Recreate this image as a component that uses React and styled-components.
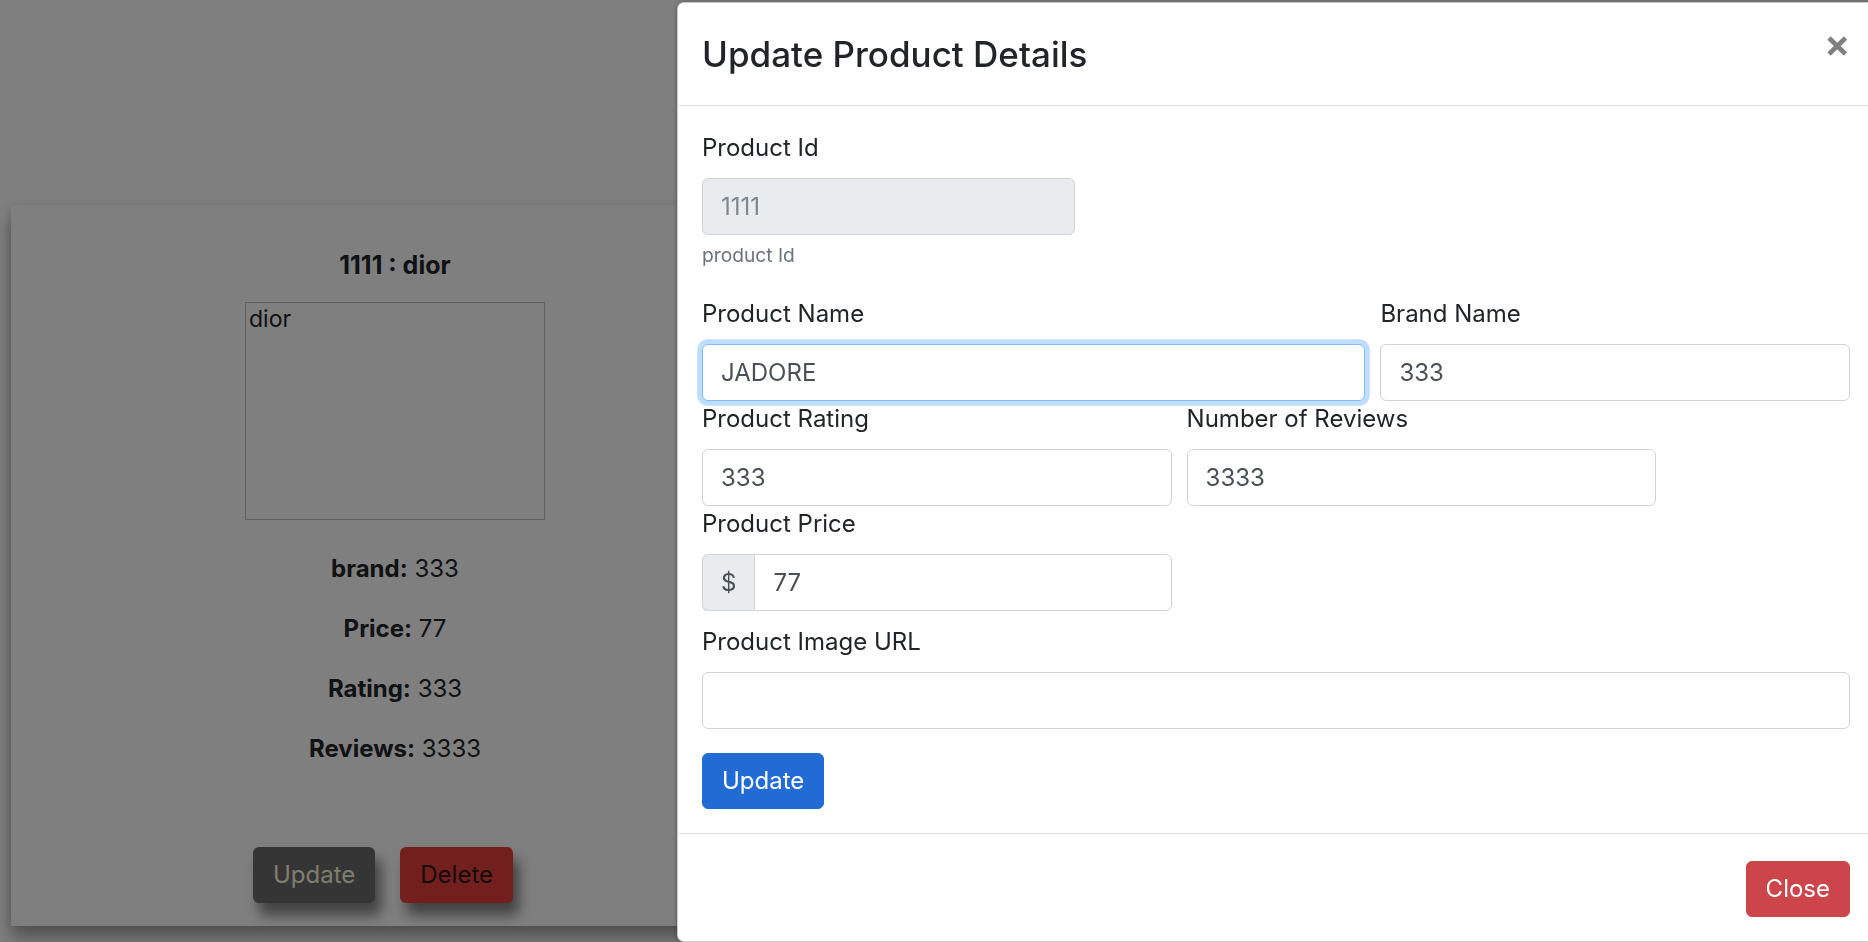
import React from 'react';
import styled, { createGlobalStyle, css } from 'styled-components';

const GlobalStyle = createGlobalStyle`
    html, body {
        margin: 0;
        padding: 0;
        background: #fff;
        font-family: Inter, "Noto Sans", sans-serif;
        overflow: hidden;
    }
    * {
        box-sizing: border-box;
    }
`;

const App = () => {

    return (
        <React.Fragment>
            <GlobalStyle />
            <Page>
                <ProductCard>
                    <CardTitle>1111 : dior</CardTitle>
                    <ImageBox>dior</ImageBox>
                    <Detail><b>brand:</b> 333</Detail>
                    <Detail><b>Price:</b> 77</Detail>
                    <Detail><b>Rating:</b> 333</Detail>
                    <Detail><b>Reviews:</b> 3333</Detail>
                    <CardActions>
                        <CardButton $variant="update">Update</CardButton>
                        <CardButton $variant="delete">Delete</CardButton>
                    </CardActions>
                </ProductCard>
            </Page>

            <Backdrop />

            <Modal>
                <ModalHeader>
                    <ModalTitle>Update Product Details</ModalTitle>
                    <CloseX aria-label="Close">
                        <svg width="36" height="36" viewBox="0 0 36 36">
                            <path d="M15 11 L31.5 27 M31.5 11 L15 27" stroke="currentColor" strokeWidth="4.6" fill="none" />
                        </svg>
                    </CloseX>
                </ModalHeader>

                <ModalBody>
                    <FormRow $mb={26}>
                        <Field $span={4}>
                            <Label>Product Id</Label>
                            <Input defaultValue="1111" disabled />
                            <Help>product Id</Help>
                        </Field>
                    </FormRow>

                    <FormRow>
                        <Field $span={7}>
                            <Label>Product Name</Label>
                            <Input defaultValue="JADORE" $focused readOnly />
                        </Field>
                        <Field $span={5}>
                            <Label>Brand Name</Label>
                            <Input defaultValue="333" readOnly />
                        </Field>
                    </FormRow>

                    <FormRow>
                        <Field $span={5}>
                            <Label>Product Rating</Label>
                            <Input defaultValue="333" readOnly />
                        </Field>
                        <Field $span={5}>
                            <Label>Number of Reviews</Label>
                            <Input defaultValue="3333" readOnly />
                        </Field>
                    </FormRow>

                    <FormRow $mb={13}>
                        <Field $span={5}>
                            <Label>Product Price</Label>
                            <InputGroup>
                                <Addon>$</Addon>
                                <Input defaultValue="77" $joined readOnly />
                            </InputGroup>
                        </Field>
                    </FormRow>

                    <FormRow $mb={24}>
                        <Field $span={12}>
                            <Label>Product Image URL</Label>
                            <Input defaultValue="" readOnly />
                        </Field>
                    </FormRow>

                    <Button $color="#226bd5">Update</Button>
                </ModalBody>

                <ModalFooter>
                    <Button $color="#cc454b">Close</Button>
                </ModalFooter>
            </Modal>
        </React.Fragment>
    );
};

const Page = styled.div`
    width: 1868px;
    height: 942px;
    padding: 205px 0 0 11px;
`;

const ProductCard = styled.div`
    width: 768px;
    height: 721px;
    padding-top: 42px;
    background: #fff;
    display: flex;
    flex-direction: column;
    align-items: center;
    box-shadow: 0 12px 16px rgba(0, 0, 0, 0.36), -2px 0 8px rgba(0, 0, 0, 0.06);
    color: #212529;
`;

const CardTitle = styled.div`
    font-size: 25px;
    font-weight: 700;
    line-height: 36px;
    margin-bottom: 19px;
`;

const ImageBox = styled.div`
    width: 300px;
    height: 218px;
    border: 1px solid #c2c2c2;
    padding: 1px 3px;
    font-size: 23px;
    line-height: 30px;
    margin-bottom: 31px;
`;

const Detail = styled.p`
    margin: 0 0 24px;
    font-size: 24px;
    line-height: 36px;

    b {
        font-weight: 700;
    }
`;

const CardActions = styled.div`
    display: flex;
    gap: 25px;
    margin-top: 56px;
    margin-right: 24px;
`;

const CardButton = styled.div`
    font-size: 24px;
    line-height: 36px;
    padding: 10px 20px;
    border-radius: 6px;
    box-shadow: 6px 12px 14px rgba(0, 0, 0, 0.5);
    ${p => p.$variant === 'update' ? css`
        background: #6a6a6a;
        color: #fffbe0;
    ` : css`
        background: #e43e3a;
        color: #2a1a18;
    `}
`;

const Backdrop = styled.div`
    position: fixed;
    inset: 0;
    background: rgba(0, 0, 0, 0.5);
`;

const Modal = styled.div`
    position: fixed;
    top: 2px;
    left: 677px;
    width: 1198px;
    background: #fff;
    border: 1px solid rgba(0, 0, 0, 0.2);
    border-radius: 7px;
    box-shadow: 0 0 5px rgba(0, 0, 0, 0.35);
`;

const ModalHeader = styled.div`
    display: flex;
    align-items: flex-start;
    padding: 24px;
    border-bottom: 1.5px solid #dee2e6;
`;

const ModalTitle = styled.h4`
    margin: 0;
    font-size: 35px;
    font-weight: 500;
    line-height: 54px;
    color: #212529;
`;

const CloseX = styled.button`
    margin: -24px -24px -24px auto;
    padding: 24px;
    background: none;
    border: 0;
    color: rgba(0, 0, 0, 0.5);
    display: flex;

    svg {
        display: block;
    }
`;

const ModalBody = styled.div`
    padding: 24px;
`;

const FormRow = styled.div`
    display: grid;
    grid-template-columns: repeat(12, 1fr);
    column-gap: 15px;
    margin-bottom: ${p => p.$mb || 0}px;
`;

const Field = styled.div`
    grid-column: span ${p => p.$span};
`;

const Label = styled.label`
    display: block;
    font-size: 24px;
    line-height: 36px;
    margin-bottom: 12px;
    color: #212529;
`;

const Input = styled.input`
    display: block;
    width: 100%;
    height: 57px;
    padding: 9px 18px;
    font-family: Inter, "Noto Sans", sans-serif;
    font-size: 24px;
    line-height: 36px;
    color: #495057;
    background: #fff;
    border: 1.5px solid #ced4da;
    border-radius: 6px;
    outline: none;

    &:disabled {
        background: #e9ecef;
        color: #7e878f;
        opacity: 1;
    }

    ${p => p.$focused && css`
        border-color: #80bdff;
        box-shadow: 0 0 0 4.8px rgba(0, 123, 255, 0.25);
    `}

    ${p => p.$joined && css`
        border-top-left-radius: 0;
        border-bottom-left-radius: 0;
        flex: 1;
    `}
`;

const Help = styled.small`
    display: block;
    margin-top: 6px;
    font-size: 19.2px;
    line-height: 28.8px;
    color: #6c757d;
`;

const InputGroup = styled.div`
    display: flex;
`;

const Addon = styled.span`
    display: flex;
    align-items: center;
    padding: 0 18px;
    font-size: 24px;
    color: #495057;
    background: #e9ecef;
    border: 1.5px solid #ced4da;
    border-right: 0;
    border-radius: 6px 0 0 6px;
`;

const Button = styled.button`
    font-family: Inter, "Noto Sans", sans-serif;
    font-size: 24px;
    line-height: 36px;
    padding: 9px 19px;
    color: #fff;
    background: ${p => p.$color};
    border: 1.5px solid ${p => p.$color};
    border-radius: 6px;
`;

const ModalFooter = styled.div`
    display: flex;
    justify-content: flex-end;
    padding: 21px 18px 18px;
    border-top: 1.5px solid #dee2e6;

    ${Button} {
        margin: 6px;
    }
`;

export default App;
